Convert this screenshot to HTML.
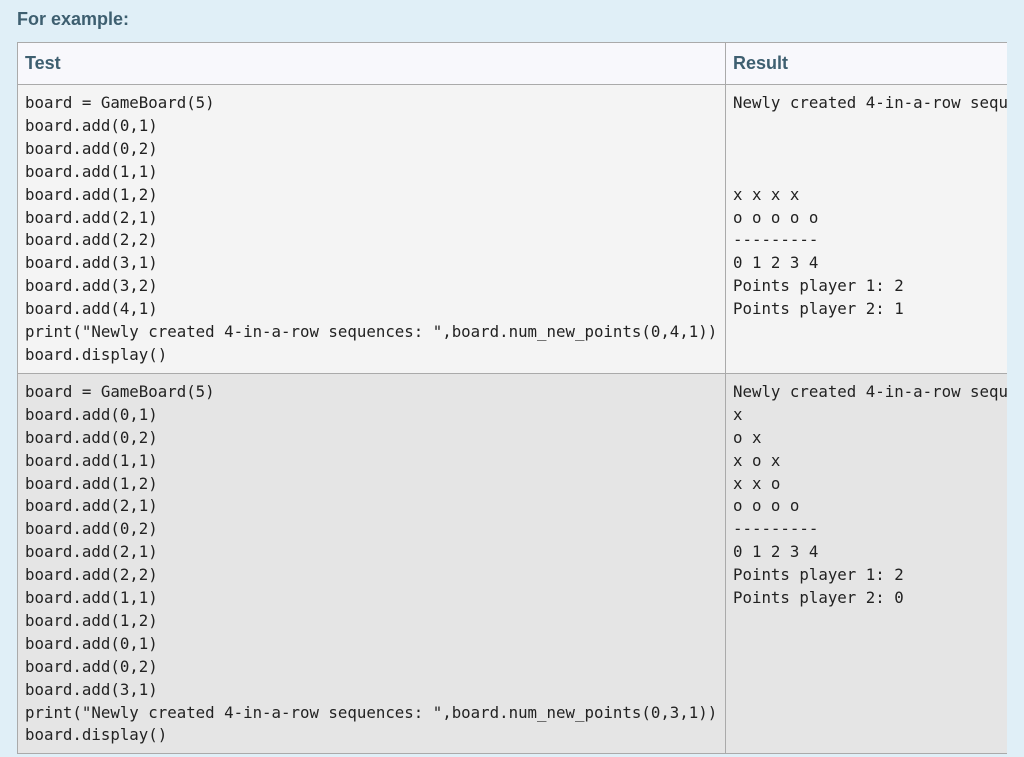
<!DOCTYPE html>
<html><head><style>
body{margin:0;background:#e0eff7;width:1024px;height:757px;overflow:hidden;font-family:"Liberation Sans",sans-serif;}
h4{position:absolute;left:17px;top:9px;margin:0;font-size:18px;font-weight:bold;color:#3e5f70;}
.wrap{position:absolute;left:17px;top:42px;width:990px;overflow:hidden;}
table{border-collapse:collapse;width:1100px;}
th{background:#f8f8fc;color:#3e5f70;font-size:18px;text-align:left;height:41px;padding:0 7px;border:1px solid #aaa;}
td{vertical-align:top;padding:7px 7px 6px 7px;border:1px solid #aaa;font-family:"DejaVu Sans Mono",monospace;font-size:15.75px;line-height:22.9px;white-space:pre;color:#222;}
tr.r1 td{background:#f4f4f4;}
tr.r2 td{background:#e5e5e5;}
td.a{width:693px;}
</style></head><body>
<h4>For example:</h4>
<div class="wrap"><table>
<tr><th style="width:693px">Test</th><th>Result</th></tr>
<tr class="r1"><td class="a">board = GameBoard(5)
board.add(0,1)
board.add(0,2)
board.add(1,1)
board.add(1,2)
board.add(2,1)
board.add(2,2)
board.add(3,1)
board.add(3,2)
board.add(4,1)
print("Newly created 4-in-a-row sequences: ",board.num_new_points(0,4,1))
board.display()</td><td>Newly created 4-in-a-row sequences:  1



x x x x
o o o o o
---------
0 1 2 3 4
Points player 1: 2
Points player 2: 1</td></tr>
<tr class="r2"><td class="a">board = GameBoard(5)
board.add(0,1)
board.add(0,2)
board.add(1,1)
board.add(1,2)
board.add(2,1)
board.add(0,2)
board.add(2,1)
board.add(2,2)
board.add(1,1)
board.add(1,2)
board.add(0,1)
board.add(0,2)
board.add(3,1)
print("Newly created 4-in-a-row sequences: ",board.num_new_points(0,3,1))
board.display()</td><td>Newly created 4-in-a-row sequences:  1
x
o x
x o x
x x o
o o o o
---------
0 1 2 3 4
Points player 1: 2
Points player 2: 0</td></tr>
</table></div>
</body></html>
